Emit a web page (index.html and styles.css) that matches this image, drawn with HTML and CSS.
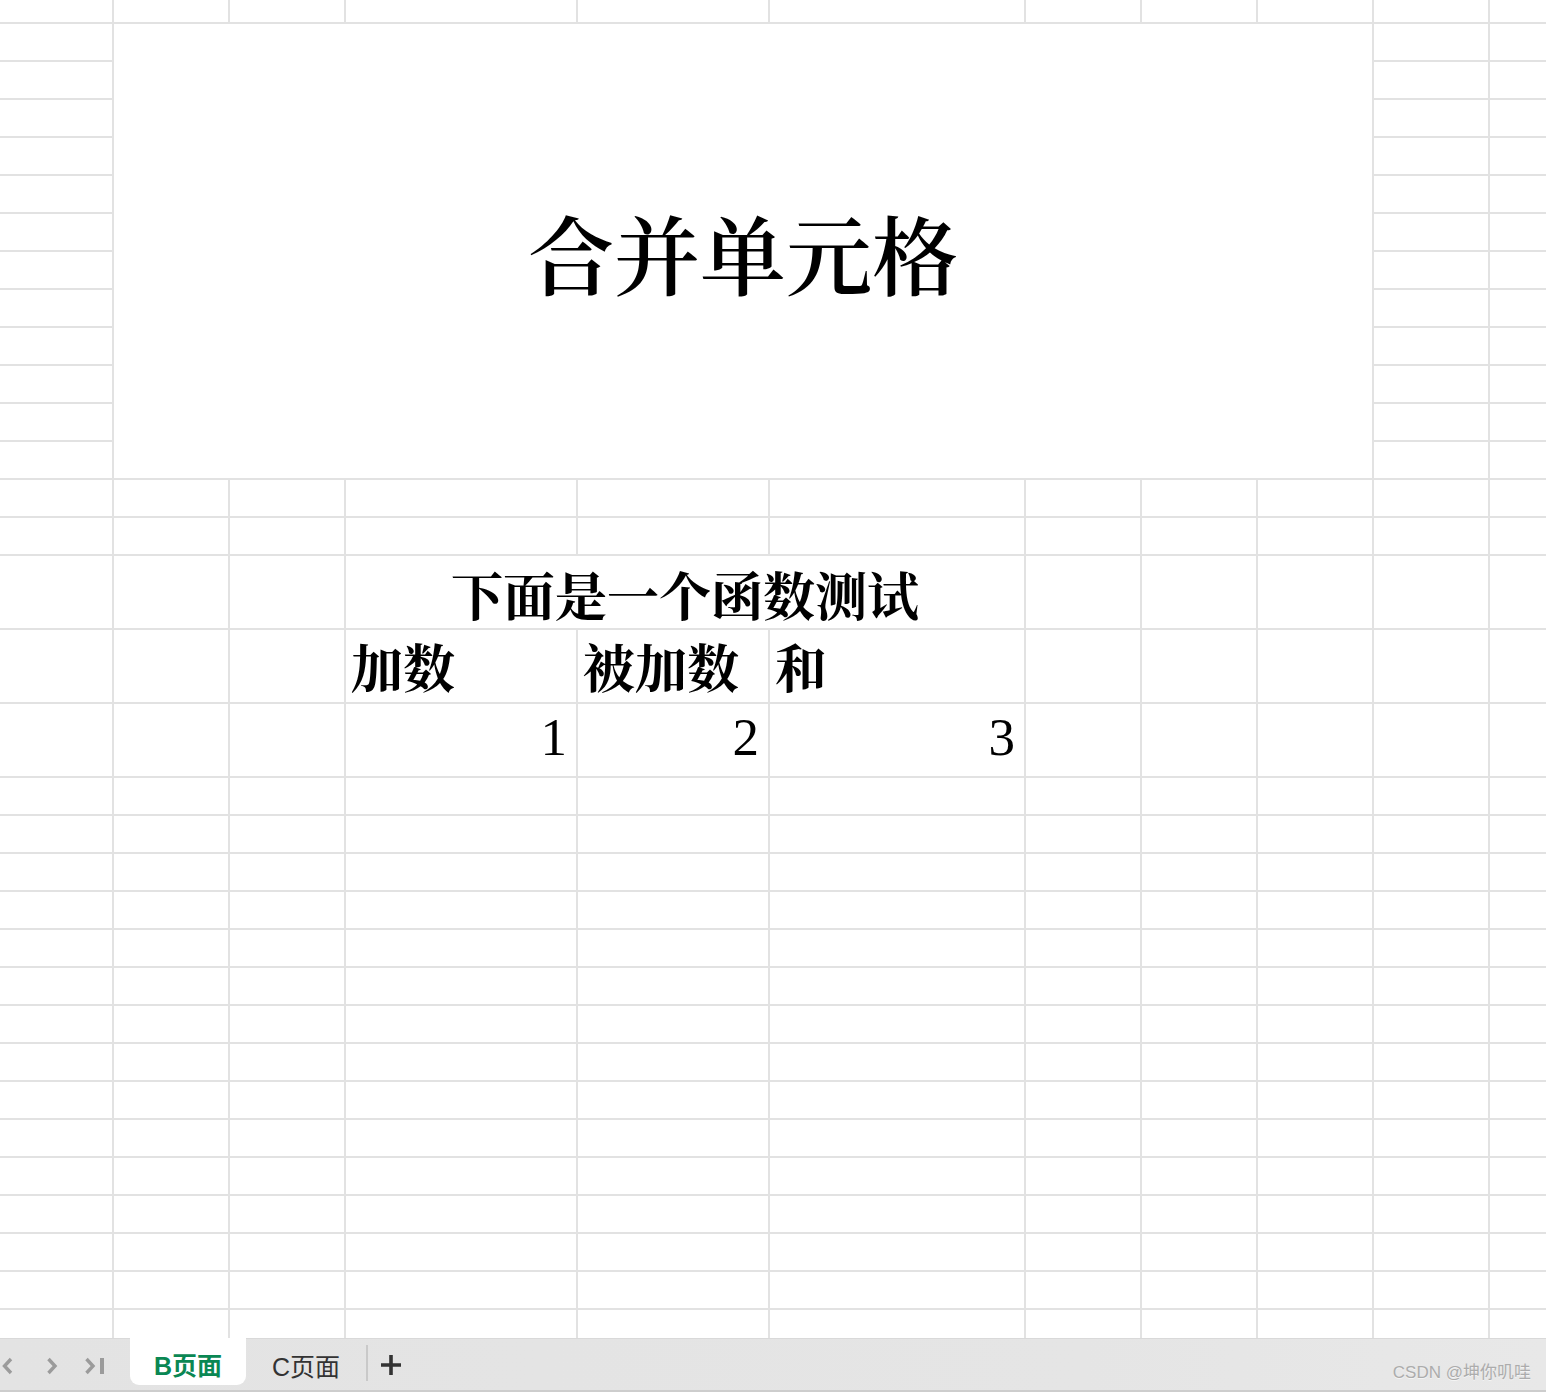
FILE: index.html
```html
<!DOCTYPE html>
<html lang="zh-CN">
<head>
<meta charset="utf-8">
<title>合并单元格</title>
<link rel="stylesheet" href="styles.css">
</head>
<body>
<div class="sheet">
  <div class="cell title">合并单元格</div>
  <div class="cell caption">下面是一个函数测试</div>
  <div class="cell head c4 r17">加数</div>
  <div class="cell head c5 r17">被加数</div>
  <div class="cell head c6 r17">和</div>
  <div class="cell num c4 r18">1</div>
  <div class="cell num c5 r18">2</div>
  <div class="cell num c6 r18">3</div>

  <div class="cell"></div><div class="cell"></div><div class="cell"></div><div class="cell"></div><div class="cell"></div><div class="cell"></div><div class="cell"></div><div class="cell"></div><div class="cell"></div><div class="cell"></div><div class="cell"></div>
  <div class="cell"></div><div class="cell"></div><div class="cell"></div><div class="cell"></div><div class="cell"></div><div class="cell"></div><div class="cell"></div><div class="cell"></div><div class="cell"></div><div class="cell"></div><div class="cell"></div>
  <div class="cell"></div><div class="cell"></div><div class="cell"></div><div class="cell"></div><div class="cell"></div><div class="cell"></div><div class="cell"></div><div class="cell"></div><div class="cell"></div><div class="cell"></div><div class="cell"></div>
  <div class="cell"></div><div class="cell"></div><div class="cell"></div><div class="cell"></div><div class="cell"></div><div class="cell"></div><div class="cell"></div><div class="cell"></div><div class="cell"></div><div class="cell"></div><div class="cell"></div>
  <div class="cell"></div><div class="cell"></div><div class="cell"></div><div class="cell"></div><div class="cell"></div><div class="cell"></div><div class="cell"></div><div class="cell"></div><div class="cell"></div><div class="cell"></div><div class="cell"></div>
  <div class="cell"></div><div class="cell"></div><div class="cell"></div><div class="cell"></div><div class="cell"></div><div class="cell"></div><div class="cell"></div><div class="cell"></div><div class="cell"></div><div class="cell"></div><div class="cell"></div>
  <div class="cell"></div><div class="cell"></div><div class="cell"></div><div class="cell"></div><div class="cell"></div><div class="cell"></div><div class="cell"></div><div class="cell"></div><div class="cell"></div><div class="cell"></div><div class="cell"></div>
  <div class="cell"></div><div class="cell"></div><div class="cell"></div><div class="cell"></div><div class="cell"></div><div class="cell"></div><div class="cell"></div><div class="cell"></div><div class="cell"></div><div class="cell"></div><div class="cell"></div>
  <div class="cell"></div><div class="cell"></div><div class="cell"></div><div class="cell"></div><div class="cell"></div><div class="cell"></div><div class="cell"></div><div class="cell"></div><div class="cell"></div><div class="cell"></div><div class="cell"></div>
  <div class="cell"></div><div class="cell"></div><div class="cell"></div><div class="cell"></div><div class="cell"></div><div class="cell"></div><div class="cell"></div><div class="cell"></div><div class="cell"></div><div class="cell"></div><div class="cell"></div>
  <div class="cell"></div><div class="cell"></div><div class="cell"></div><div class="cell"></div><div class="cell"></div><div class="cell"></div><div class="cell"></div><div class="cell"></div><div class="cell"></div><div class="cell"></div><div class="cell"></div>
  <div class="cell"></div><div class="cell"></div><div class="cell"></div><div class="cell"></div><div class="cell"></div><div class="cell"></div><div class="cell"></div><div class="cell"></div><div class="cell"></div><div class="cell"></div><div class="cell"></div>
  <div class="cell"></div><div class="cell"></div><div class="cell"></div><div class="cell"></div><div class="cell"></div><div class="cell"></div><div class="cell"></div><div class="cell"></div><div class="cell"></div><div class="cell"></div><div class="cell"></div>
  <div class="cell"></div><div class="cell"></div><div class="cell"></div><div class="cell"></div><div class="cell"></div><div class="cell"></div><div class="cell"></div><div class="cell"></div><div class="cell"></div><div class="cell"></div><div class="cell"></div>
  <div class="cell"></div><div class="cell"></div><div class="cell"></div><div class="cell"></div><div class="cell"></div><div class="cell"></div><div class="cell"></div><div class="cell"></div><div class="cell"></div><div class="cell"></div><div class="cell"></div>
  <div class="cell"></div><div class="cell"></div><div class="cell"></div><div class="cell"></div><div class="cell"></div><div class="cell"></div><div class="cell"></div><div class="cell"></div><div class="cell"></div><div class="cell"></div><div class="cell"></div>
  <div class="cell"></div><div class="cell"></div><div class="cell"></div><div class="cell"></div><div class="cell"></div><div class="cell"></div><div class="cell"></div><div class="cell"></div><div class="cell"></div><div class="cell"></div><div class="cell"></div>
  <div class="cell"></div><div class="cell"></div><div class="cell"></div><div class="cell"></div><div class="cell"></div><div class="cell"></div><div class="cell"></div><div class="cell"></div><div class="cell"></div><div class="cell"></div><div class="cell"></div>
  <div class="cell"></div><div class="cell"></div><div class="cell"></div><div class="cell"></div><div class="cell"></div><div class="cell"></div><div class="cell"></div><div class="cell"></div><div class="cell"></div><div class="cell"></div><div class="cell"></div>
  <div class="cell"></div><div class="cell"></div><div class="cell"></div><div class="cell"></div><div class="cell"></div><div class="cell"></div><div class="cell"></div><div class="cell"></div><div class="cell"></div><div class="cell"></div><div class="cell"></div>
  <div class="cell"></div><div class="cell"></div><div class="cell"></div><div class="cell"></div><div class="cell"></div><div class="cell"></div><div class="cell"></div><div class="cell"></div><div class="cell"></div><div class="cell"></div><div class="cell"></div>
  <div class="cell"></div><div class="cell"></div><div class="cell"></div><div class="cell"></div><div class="cell"></div><div class="cell"></div><div class="cell"></div><div class="cell"></div><div class="cell"></div><div class="cell"></div><div class="cell"></div>
  <div class="cell"></div><div class="cell"></div><div class="cell"></div><div class="cell"></div><div class="cell"></div><div class="cell"></div><div class="cell"></div><div class="cell"></div><div class="cell"></div><div class="cell"></div><div class="cell"></div>
  <div class="cell"></div><div class="cell"></div><div class="cell"></div><div class="cell"></div><div class="cell"></div><div class="cell"></div><div class="cell"></div><div class="cell"></div><div class="cell"></div><div class="cell"></div><div class="cell"></div>
</div>

<div class="tabbar">
  <div class="nav">
    <svg width="130" height="52" viewBox="0 0 130 52" aria-hidden="true">
      <g fill="none" stroke="#9b9b9b" stroke-width="3.4" stroke-linecap="butt" stroke-linejoin="miter">
        <path d="M11 20 L4.5 27 L11 34"/>
        <path d="M48.5 20 L55 27 L48.5 34"/>
        <path d="M86.5 20 L93 27 L86.5 34"/>
      </g>
      <rect x="100" y="19" width="4" height="16" fill="#9b9b9b"/>
    </svg>
  </div>
  <div class="tab active">B页面</div>
  <div class="tab">C页面</div>
  <div class="sep"></div>
  <div class="add">
    <svg width="22" height="22" viewBox="0 0 22 22" aria-hidden="true">
      <path d="M11 1 V21 M1 11 H21" stroke="#333" stroke-width="3.6" fill="none"/>
    </svg>
  </div>
  <div class="mark">CSDN @坤你叽哇</div>
</div>
</body>
</html>
```

FILE: styles.css
```css
html, body {
  margin: 0;
  padding: 0;
  background: #fff;
  overflow: hidden;
}

body {
  width: 1546px;
  height: 1392px;
  display: flex;
  flex-direction: column;
}

.sheet {
  display: grid;
  grid-template-columns: 112px 114px 114px 230px 190px 254px 114px 114px 114px 114px 56px;
  grid-template-rows: 22px repeat(14, 36px) repeat(3, 72px) repeat(16, 36px);
  gap: 2px;
  background: #e2e2e2;
  height: 1338px;
  overflow: hidden;
  align-content: start;
  flex: none;
}

.cell {
  background: #fff;
  display: flex;
  min-width: 0;
  overflow: visible;
  color: #000;
  font-family: "Liberation Serif", "Noto Serif CJK SC", "Noto Sans CJK SC", serif;
  line-height: 1;
  white-space: nowrap;
}

.title {
  grid-column: 2 / 10;
  grid-row: 2 / 14;
  justify-content: center;
  align-items: center;
  font-size: 86px;
  font-weight: 600;
  padding-top: 18px;
}

.caption {
  grid-column: 4 / 7;
  grid-row: 16;
  justify-content: center;
  align-items: flex-end;
  font-size: 52px;
  font-weight: 700;
  padding-bottom: 3px;
}

.c4 { grid-column: 4; }
.c5 { grid-column: 5; }
.c6 { grid-column: 6; }
.r17 { grid-row: 17; }
.r18 { grid-row: 18; }

.head {
  align-items: flex-end;
  font-size: 52px;
  font-weight: 700;
  padding-left: 5px;
  padding-bottom: 5px;
}

.num {
  justify-content: flex-end;
  align-items: flex-end;
  font-size: 53px;
  padding-right: 9px;
  padding-bottom: 12px;
}

.tabbar {
  flex: none;
  height: 54px;
  box-sizing: border-box;
  display: flex;
  align-items: flex-start;
  background: linear-gradient(to right, #e3e3e3 0%, #e5e5e5 70%, #e8e8e8 100%);
  border-top: 1px solid #d9d9d9;
  border-bottom: 2px solid #cdcdcd;
  font-family: "Liberation Sans", "Noto Sans CJK SC", sans-serif;
  position: relative;
}

.nav {
  width: 130px;
  height: 51px;
  flex: none;
}

.nav svg {
  display: block;
}

.tab {
  flex: none;
  height: 51px;
  display: flex;
  align-items: center;
  justify-content: center;
  font-size: 25px;
  color: #333;
}

.tab.active {
  width: 116px;
  height: 47px;
  box-sizing: border-box;
  padding-top: 4px;
  background: #fff;
  border-radius: 0 0 9px 9px;
  color: #0a8753;
  font-weight: 700;
  margin-top: -1px;
}

.tab:not(.active) {
  width: 120px;
}

.sep {
  flex: none;
  width: 2px;
  height: 36px;
  margin-top: 6px;
  background: #c9c9c9;
}

.add {
  flex: none;
  width: 46px;
  height: 51px;
  display: flex;
  align-items: center;
  justify-content: center;
}

.add svg {
  display: block;
}

.mark {
  margin-left: auto;
  margin-right: 15px;
  align-self: center;
  padding-top: 12px;
  font-size: 17px;
  color: #acacac;
  text-shadow: 0 1px 0 #f4f4f4;
}
```
